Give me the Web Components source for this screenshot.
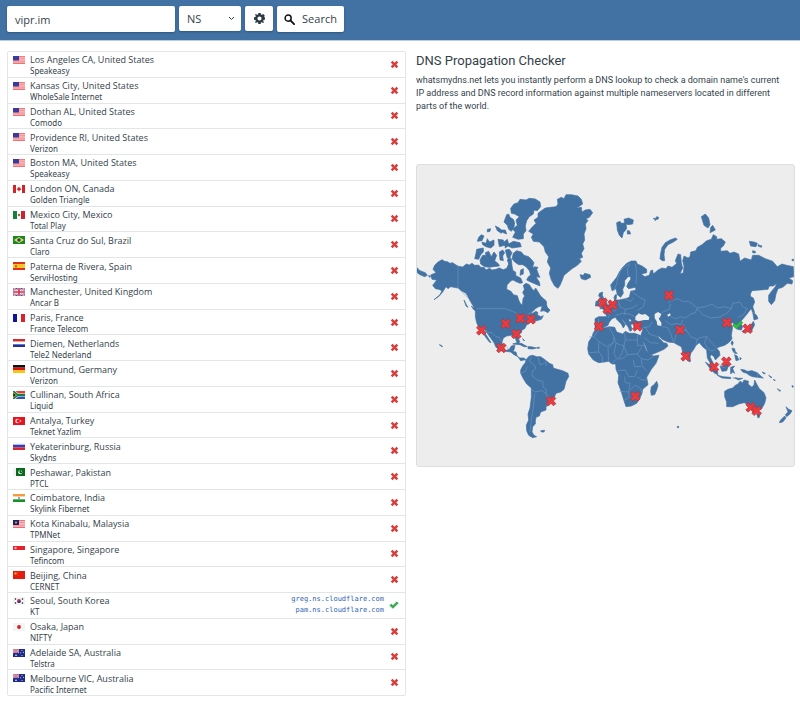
<!DOCTYPE html>
<html lang="en">
<head>
<meta charset="utf-8">
<meta name="viewport" content="width=device-width, initial-scale=1">
<title>DNS Propagation Checker</title>
<style>
html, body { margin: 0; }
body { background: #fff; color: #343f4b; font-family: "Open Sans", "Noto Sans", sans-serif; font-size: 9px; }
</style>
</head>
<body>
<dns-app>
  <search-bar slot="header"></search-bar>
  <result-list slot="results"></result-list>
  <about-panel slot="aside">
    <span slot="title">DNS Propagation Checker</span>
    whatsmydns.net lets you instantly perform a DNS lookup to check a domain name's current IP address and DNS record information against multiple nameservers located in different parts of the world.
  </about-panel>
  <world-map slot="aside"></world-map>
</dns-app>

<script>
class ShadowElement extends HTMLElement {
  constructor() { super(); this.attachShadow({ mode: "open" }); }
  connectedCallback() { this.shadowRoot.innerHTML = this.render(); }
}

customElements.define("dns-app", class extends ShadowElement {
  render() { return `
<style>
:host { display: flex; flex-direction: column; min-height: 100vh; }
main { flex: 1; display: grid; grid-template-columns: 399fr 379fr; gap: 10px; padding: 10px 5px 5px 7px; }
.col { display: flex; flex-direction: column; min-width: 0; }
@media (max-width: 560px) { main { grid-template-columns: 1fr; } }
</style>
<slot name="header"></slot>
<main>
  <div class="col"><slot name="results"></slot></div>
  <div class="col"><slot name="aside"></slot></div>
</main>`; }
});

customElements.define("search-bar", class extends ShadowElement {
  render() { return `
<style>
:host { display: block; background: #4172a3; border-bottom: 1px solid #b9cde0; }
form { display: flex; align-items: flex-start; gap: 4px; padding: 6px 7px; margin: 0; height: 28px; }
input, select, button {
  box-sizing: border-box; height: 25px; margin: 0; border: 0; border-radius: 2px; background: #fff;
  color: #343f4b; font-family: inherit; font-size: 11px; line-height: 16px; box-shadow: 0 1px 2px #1f3d5c80;
}
input { width: 168px; height: 26px; padding: 0 8px; }
.pick { display: grid; align-items: center; width: 62px; }
.pick > * { grid-area: 1 / 1; }
select { appearance: none; width: 100%; padding: 0 8px; }
.pick svg { justify-self: end; margin-right: 6px; pointer-events: none; }
button { display: flex; align-items: center; justify-content: center; padding: 0; width: 28px; }
.go { width: 67px; height: 26px; gap: 7px; }
svg { display: block; }
</style>
<form onsubmit="return false">
  <input type="text" aria-label="Domain name" value="vipr.im">
  <span class="pick">
    <select aria-label="Record type"><option>A</option><option>MX</option><option selected>NS</option><option>TXT</option></select>
    <svg width="7" height="5" viewBox="0 0 7 5" fill="none" stroke="#343f4b"><path d="M1 1l2.5 2.5L6 1"/></svg>
  </span>
  <button type="button" aria-label="Settings">
    <svg width="11" height="11" viewBox="-8 -8 16 16"><path fill="#2d3a48" fill-rule="evenodd" d="M-1.7-8h3.4l.4 2.1 1.5.6 1.8-1.2L7.800-4.100 6.500-2.300 7.900-1.700V1.700L5.900 2.100 5.300 3.600 6.500 5.400 5.400 6.500 3.600 5.300 2.100 5.900 1.700 8H-1.700L-2.100 5.900-3.600 5.300-5.400 6.500-6.500 5.400-5.300 3.600-5.900 2.100-8 1.700V-1.700L-5.900-2.100-5.300-3.600-6.500-5.400-5.400-6.500-3.600-5.300-2.100-5.900zM3 0A3 3 0 1 0-3 0 3 3 0 1 0 3 0z"/></svg>
  </button>
  <button type="submit" class="go">
    <svg width="11" height="11" viewBox="0 0 12 12" fill="none" stroke="#111"><circle cx="4.500" cy="4.500" r="3.300" stroke-width="1.600"/><path d="M7 7l4 4" stroke-width="2" stroke-linecap="round"/></svg>
    Search
  </button>
</form>`; }
});

const rect = (x, y, w, h, f) => `<path fill="${f}" d="M${x} ${y}h${w}v${h}h-${w}z"/>`;
const bands = (...c) => c.map((f, i) => rect(0, i * 8 / c.length, 12, 8 / c.length, f)).join("");
const posts = (...c) => c.map((f, i) => rect(i * 4, 0, 4, 8, f)).join("");
const dot = (x, y, r, f) => `<circle cx="${x}" cy="${y}" r="${r}" fill="${f}"/>`;
const line = (d, w, f) => `<path d="${d}" stroke="${f}" stroke-width="${w}" fill="none"/>`;
const union = line("M0 0l12 8M12 0L0 8", 1.8, "#fff") + line("M0 0l12 8M12 0L0 8", .8, "#d8304a") + line("M6 0v8M0 4h12", 2.8, "#fff") + line("M6 0v8M0 4h12", 1.600, "#d8304a");
const FLAGS = {
  us: bands("#f47a7e", "#f9a3a5", "#f47a7e", "#f9a3a5", "#f0787c", "#f9a3a5", "#ee7276") + rect(0, 0, 6, 4.500, "#3b3a9e"),
  ca: rect(0, 0, 12, 8, "#fff") + rect(0, 0, 3, 8, "#d92027") + rect(9, 0, 3, 8, "#d92027") + `<path fill="#d92027" d="M6 1.500l.7 1.300.8-.3-.1 1.200 1 .2-1.300 1.500H6.300V6.500h-.6V5.400H4.900L3.600 3.900l1-.2-.1-1.200.8.3z"/>`,
  mx: posts("#15803a", "#fff", "#d2202f") + dot(6, 4, 1.200, "#8a6a3c"),
  br: rect(0, 0, 12, 8, "#168a2a") + `<path fill="#f1e04a" d="M6 1l5 3-5 3-5-3z"/>` + dot(6, 4, 1.800, "#233a80"),
  es: rect(0, 0, 12, 8, "#e0301e") + rect(0, 2, 12, 4, "#fbc624") + rect(2, 3, 2, 2.500, "#d4682a"),
  gb: rect(0, 0, 12, 8, "#3c4f9e") + union,
  fr: posts("#13139a", "#fff", "#e0202c"),
  nl: bands("#d02a2a", "#fff", "#1f2fa0"),
  de: bands("#111", "#e01010", "#f8c800"),
  za: rect(0, 0, 12, 4, "#e04432") + rect(0, 4, 12, 4, "#2d55b8") + line("M0 0l5 4-5 4M5 4h7", 3, "#fff") + line("M0 0l5 4-5 4M5 4h7", 1.800, "#158045") + `<path d="M0 1.500L3.400 4 0 6.500z" fill="#111" stroke="#f0c030" stroke-width=".6"/>`,
  tr: rect(0, 0, 12, 8, "#e8151f") + dot(4.500, 4, 2.200, "#fff") + dot(5.200, 4, 1.700, "#e8151f") + dot(7.500, 4, .8, "#fff"),
  ru: bands("#f7f7fb", "#2c3fc0", "#d8242e"),
  pk: rect(0, 0, 12, 8, "#086a1c") + rect(0, 0, 3, 8, "#f2f4f2") + dot(7.300, 4.200, 2, "#fff") + dot(8, 3.700, 1.700, "#086a1c") + dot(8.500, 3, .5, "#fff"),
  in: bands("#f59a3e", "#fff", "#17902a") + dot(6, 4, .9, "#6a6ac0"),
  my: bands("#e8707a", "#fbb0b4", "#e8707a", "#fbb0b4", "#e8707a", "#fbb0b4", "#e8707a") + rect(0, 0, 6, 5, "#20206a") + dot(3, 2.500, 1.100, "#c8a84a"),
  sg: bands("#e8202c", "#fff") + dot(2.500, 2, 1.200, "#f9b0b4"),
  cn: rect(0, 0, 12, 8, "#e51a10") + dot(2.500, 2.500, 1.200, "#f7a21c") + dot(5, 1.500, .4, "#f7c21c") + dot(5, 4, .4, "#f7c21c"),
  kr: rect(0, 0, 12, 8, "#f4f4f4") + dot(6, 4, 1.900, "#c93048") + `<path fill="#2b3a9a" d="M4.100 4a1.900 1.900 0 0 0 3.800 0q-1-.8-1.900 0t-1.900 0z"/>` + line("M2 2.500l1-1M9 1.500l1 1M2 5.500l1 1M9 6.500l1-1", 1.200, "#333"),
  jp: rect(0, 0, 12, 8, "#f4f4f4") + dot(6, 4, 1.900, "#d81c24"),
  au: rect(0, 0, 12, 8, "#1d2a8c") + `<g transform="scale(.5)">${union}</g>` + dot(3, 6.300, .8, "#fff") + dot(9, 1.500, .5, "#fff") + dot(9, 6.500, .5, "#fff") + dot(7.700, 3.700, .5, "#fff") + dot(10.500, 3.200, .5, "#fff"),
};
const CROSS = "M-5-2.600L-2.600-5 0-2.400 2.600-5 5-2.600 2.400 0 5 2.600 2.600 5 0 2.400-2.600 5-5 2.600-2.400 0z";
const TICK = "M-5.500.6L-3.300-1.600-1.300.3 3.300-4.300 5.500-2.100-1.300 4.600z";

customElements.define("result-row", class extends ShadowElement {
  render() {
    const a = n => this.getAttribute(n) || "";
    const found = a("servers");
    return `
<style>
:host { display: flex; align-items: center; box-sizing: border-box; flex: 1 0 auto; padding: 0 6px 0 5px; border-bottom: 1px solid #e2e6e8; }
:host(:last-child) { border-bottom: 0; }
.flag { display: block; align-self: flex-start; margin: 4px 5px 0 0; }
.where { flex: 1; min-width: 0; }
.place { font-size: 9px; line-height: 13px; padding-top: 1px; }
.isp { font-family: "Noto Sans", sans-serif; font-size: 8px; line-height: 10px; }
.found { margin-right: 5px; text-align: right; color: #2a62b4; font: 7px/11px "DejaVu Sans Mono", "Liberation Mono", monospace; }
.mark { display: block; flex: none; }
.yes { width: 10px; height: 10px; }
</style>
<svg class="flag" width="12" height="8" viewBox="0 0 12 8" aria-hidden="true">${FLAGS[a("flag")]}</svg>
<div class="where"><div class="place">${a("place")}</div><div class="isp">${a("isp")}</div></div>
${found ? `<div class="found">${found.split(" ").map(s => `<div>${s}</div>`).join("")}</div>` : ""}
<svg class="mark${found ? " yes" : ""}" width="9" height="9" viewBox="-6 -6 12 12" role="img" aria-label="${found ? "Found" : "Not found"}"><path fill="${found ? "#38ad51" : "#d5403f"}" d="${found ? TICK : CROSS}"/></svg>`;
  }
});

const RESULTS = [
  ["us", "Los Angeles CA, United States", "Speakeasy"],
  ["us", "Kansas City, United States", "WholeSale Internet"],
  ["us", "Dothan AL, United States", "Comodo"],
  ["us", "Providence RI, United States", "Verizon"],
  ["us", "Boston MA, United States", "Speakeasy"],
  ["ca", "London ON, Canada", "Golden Triangle"],
  ["mx", "Mexico City, Mexico", "Total Play"],
  ["br", "Santa Cruz do Sul, Brazil", "Claro"],
  ["es", "Paterna de Rivera, Spain", "ServiHosting"],
  ["gb", "Manchester, United Kingdom", "Ancar B"],
  ["fr", "Paris, France", "France Telecom"],
  ["nl", "Diemen, Netherlands", "Tele2 Nederland"],
  ["de", "Dortmund, Germany", "Verizon"],
  ["za", "Cullinan, South Africa", "Liquid"],
  ["tr", "Antalya, Turkey", "Teknet Yazlim"],
  ["ru", "Yekaterinburg, Russia", "Skydns"],
  ["pk", "Peshawar, Pakistan", "PTCL"],
  ["in", "Coimbatore, India", "Skylink Fibernet"],
  ["my", "Kota Kinabalu, Malaysia", "TPMNet"],
  ["sg", "Singapore, Singapore", "Tefincom"],
  ["cn", "Beijing, China", "CERNET"],
  ["kr", "Seoul, South Korea", "KT", "greg.ns.cloudflare.com pam.ns.cloudflare.com"],
  ["jp", "Osaka, Japan", "NIFTY"],
  ["au", "Adelaide SA, Australia", "Telstra"],
  ["au", "Melbourne VIC, Australia", "Pacific Internet"],
];

customElements.define("result-list", class extends ShadowElement {
  render() { return `
<style>
:host { flex: 1; display: flex; flex-direction: column; border: 1px solid #e2e6e8; border-radius: 2px; }
</style>
${RESULTS.map(([flag, place, isp, servers]) => `<result-row role="listitem" flag="${flag}" place="${place}" isp="${isp}"${servers ? ` servers="${servers}"` : ""}></result-row>`).join("")}`; }
  connectedCallback() { super.connectedCallback(); this.setAttribute("role", "list"); }
});

customElements.define("about-panel", class extends ShadowElement {
  render() { return `
<style>
:host { display: block; padding: 0 10px 51px 0; font-family: Roboto, "Open Sans", sans-serif; }
h1 { margin: 0 0 3px; font-size: 13px; font-weight: 400; line-height: 20px; }
p { margin: 0; font-size: 9px; line-height: 13px; }
</style>
<h1><slot name="title"></slot></h1>
<p><slot></slot></p>`; }
});

/* Map drawing: land outlines, seas cut into them, country borders. */
const LAND = [
  /* North and Central America */
  "M56 345L72 338 63 328 68 316 78 306 90 299 98 304 106 305 114 310 122 308 132 315 140 319 152 321 163 312 172 315 180 310 188 316 200 315 206 322 216 322 222 330 232 325 240 330 252 328 262 324 274 329 284 325 290 312 286 300 292 290 298 298 300 318 303 332 311 336 312 352 306 358 295 364 285 375 284 388 297 394 304 404 316 407 320 420 326 432 331 434 333 416 338 408 332 398 337 388 334 376 342 370 352 374 358 384 366 392 371 384 378 395 386 408 392 414 402 422 404 430 396 437 380 440 370 446 360 456 358 462 372 454 378 458 376 464 386 470 394 467 388 478 374 482 362 482 352 490 344 494 338 506 330 510 328 518 318 526 317 532 323 544 320 552 313 544 309 530 298 526 284 528 274 534 270 546 272 560 280 572 292 568 298 558 309 556 306 570 301 574 312 576 316 590 324 594 336 594 342 599 336 600 326 602 318 590 306 584 296 576 282 574 266 572 252 562 246 548 236 534 226 520 217 508 212 508 222 524 232 540 237 548 232 546 220 530 210 512 200 502 194 488 190 470 190 450 185 440 175 424 168 410 162 400 148 392 138 384 126 382 116 380 108 386 102 380 92 396 82 408 66 419 84 404 90 392 80 388 70 386 62 376 70 366 74 360 60 358z",
  "M14 322L24 332 40 338 46 346 38 350 28 346 20 342 14 336z",
  "M50 346L56 350 52 352zM156 420L164 436 168 442 162 438zM178 438L194 450 196 456 184 448z",
  /* Canadian Arctic */
  "M296 145L306 132 318 128 324 118 342 120 352 115 370 117 384 126 386 140 376 152 366 150 364 162 352 170 344 182 340 198 342 212 334 222 334 236 318 238 302 232 310 216 302 208 316 196 312 180 322 170 308 162 298 160z",
  "M284 164L290 162 294 172 304 178 308 188 306 202 298 214 290 208 286 196 276 186z",
  "M250 198L262 204 272 214 268 220 256 212zM264 210L280 210 284 222 274 218zM226 208L236 206 234 214 226 216zM208 224L216 228 210 242 196 244 200 232zM226 236L232 246 246 240 246 256 236 264 222 260 212 254 210 246 222 250z",
  "M258 238L274 240 278 256 262 260zM276 246L286 238 290 252 304 244 324 248 328 260 300 264 288 258 280 264z",
  "M194 268L214 264 214 276 206 284 200 298 188 296 192 280zM204 300L212 286 222 286 220 278 230 274 238 290 246 276 254 286 248 302 260 312 262 318 244 320 232 322 218 320 206 312z",
  "M262 276L272 270 278 278 272 288 274 302 264 300zM280 270L292 268 300 278 294 292 286 294z",
  "M304 280L314 272 328 276 336 286 350 290 358 298 366 308 362 320 374 328 380 344 384 352 372 350 382 366 384 378 370 372 356 366 344 360 348 352 356 344 352 332 342 320 332 314 320 314 308 306 300 296z",
  "M302 350L314 348 326 354 332 368 324 370 310 364 300 358zM326 330L334 326 334 342 324 346zM366 320L378 322 374 328z",
  "M390 440L402 428 406 442 414 450 408 458 396 452 386 454z",
  /* Greenland */
  "M350 214L360 202 372 190 366 180 378 172 378 160 388 152 400 144 416 142 432 140 438 132 436 118 448 112 456 116 462 104 478 104 498 108 508 118 512 132 500 140 490 144 508 142 510 156 520 150 534 148 542 158 532 172 522 176 528 182 520 192 522 206 516 222 518 240 512 252 516 266 508 280 512 292 502 296 508 304 496 316 480 326 468 336 456 346 450 362 444 376 438 385 428 378 418 360 412 340 416 324 406 306 410 290 400 276 396 260 382 246 364 244 358 232 364 222z",
  "M504 344L514 346 518 340 534 344 536 352 520 360 508 356z",
  /* Caribbean */
  "M302 552L314 548 328 550 346 560 336 560 324 554zM348 560L358 560 374 564 362 567 348 566zM332 536l6 6-4-1zM376 562h6v3h-6z",
  /* South America */
  "M342 599L352 588 362 586 374 590 386 590 400 600 412 610 422 614 424 624 436 628 452 632 468 640 470 650 462 664 456 688 446 696 432 700 424 718 412 734 402 740 402 750 386 756 382 768 372 772 370 784 370 792 362 800 360 816 366 826 374 830 362 833 350 826 344 812 343 796 350 780 348 762 354 744 358 712 358 684 344 672 334 656 326 640 326 630 332 618 340 608z",
  "M386 812L398 811 396 816 388 816z",
  /* Hawaii and small islands */
  "M82 554l6 2 4 4-4-1zM796 799h4v4h-4z",
  /* Svalbard, Franz Josef, Novaya Zemlya, Severnaya Zemlya */
  "M614 188L624 184 628 190 642 188 644 206 634 218 630 234 622 226 616 210zM636 178L650 174 664 180 662 192 648 194 638 188zM646 212L652 212 656 222 646 222zM724 174l6 2 4-6 6 2-2 6-6 0-2 4z",
  "M744 296L746 280 750 262 760 248 774 240 790 234 796 238 784 246 768 254 758 268 756 284 758 302 750 302z",
  "M868 170L880 162 890 174 894 194 888 204 876 196zM896 202l6-6 8 14-16 8zM1012 244L1026 246 1036 250 1032 260 1016 258zM1038 254l12 4-2 4-10-4zM1022 272l8 2v5l-8-1zM1140 298h5v4h-5z",
  /* British Isles */
  "M562 400L572 396 571 406 576 416 584 428 588 440 578 446 564 446 570 438 564 426 566 414 560 408zM552 424L562 422 560 438 550 438z",
  /* Eurasia */
  "M596 375L606 362 614 352 622 336 632 322 644 310 658 303 672 303 676 312 690 318 704 328 704 338 688 342 698 350 712 346 716 332 722 330 724 342 738 330 750 324 762 326 768 318 780 322 792 312 802 316 804 330 792 336 796 316 790 302 798 282 806 284 808 308 812 324 804 342 814 338 816 318 812 302 816 288 828 294 834 290 836 276 852 272 856 262 870 254 884 242 898 238 904 224 914 230 914 238 928 236 940 246 934 258 926 264 926 274 946 272 954 280 966 276 980 282 984 304 998 294 1018 300 1022 286 1040 286 1060 296 1082 304 1096 320 1110 312 1124 316 1144 320 1145 350 1130 354 1142 362 1140 372 1126 370 1112 382 1098 386 1092 402 1088 422 1078 434 1070 424 1070 406 1080 392 1090 380 1094 370 1084 378 1072 378 1068 388 1044 390 1020 392 1012 408 1024 414 1028 426 1022 440 1008 458 1002 466 990 480 984 486 992 500 988 510 976 508 974 498 962 488 954 492 962 500 960 514 958 526 960 536 950 548 938 556 924 560 914 564 922 574 924 586 910 600 906 590 898 584 894 590 902 606 910 622 904 624 894 608 886 594 884 570 872 560 862 548 852 556 844 570 836 580 834 592 829 600 822 594 812 576 808 560 796 554 786 548 768 546 750 538 742 530 736 526 742 536 750 542 754 548 764 550 768 558 756 568 738 576 714 586 708 578 700 556 688 536 685 530 692 510 692 504 674 506 666 502 664 490 656 494 660 510 654 514 648 500 640 490 630 476 626 470 632 482 640 494 634 504 628 492 614 478 610 472 600 476 592 486 588 496 576 502 566 506 549 504 549 476 560 470 584 470 580 456 570 444 584 440 596 428 608 424 606 412 610 404 614 404 612 420 620 420 640 416 652 412 656 394 672 390 670 382 650 386 644 380 648 370 656 358 656 350 648 350 638 362 638 376 632 388 634 400 626 412 616 404 612 386 600 392z",
  "M1008 396l6 4 8 40 6 18-8-4-6-30z",
  /* Africa and Madagascar */
  "M684 526L668 520 652 520 640 514 632 522 614 516 608 502 592 500 576 504 560 508 552 506 544 518 540 530 530 546 527 566 530 582 544 600 560 608 578 606 590 604 600 612 611 612 612 628 620 646 618 668 628 696 636 722 642 740 658 738 674 730 684 714 690 700 692 688 708 674 704 652 718 628 732 610 741 586 726 588 712 584 702 570 694 548z",
  "M734 664L738 676 734 690 728 704 718 706 716 694 718 680 726 674z",
  /* Japan, Taiwan, Philippines */
  "M1022 456L1034 466 1038 476 1026 480zM1024 484L1028 494 1020 510 1008 516 1000 514 994 518 990 514 1002 508 1014 500zM960 542l4 6-3 8-4-6zM960 564l8 2 2 10 6 4-8 0-6-8zM968 584l8 4 4 12-8 2zM984 592l4 4-4 4z",
  "M880 606L892 614 906 624 916 632 918 644 908 640 896 628zM916 646L934 650 956 652 956 656 930 654zM962 654l14 0M968 654l12 1 12 0-12 5zM924 618L934 618 944 610 950 616 944 632 930 634zM956 622L968 618 962 626 968 640 962 636 956 642z",
  "M986 628L998 630 1006 634 1020 632 1036 638 1046 648 1054 654 1036 652 1022 650 1012 646 1004 640 992 636zM1050 636l10 4-4 2zM1070 646l10 6-3 1zM1084 658l6 3-3 1zM1096 686l10 6-3 2zM1140 676l5 4-4 2zM830 596l6 4-2 6-4-2z",
  /* Australia and New Zealand */
  "M938 694L948 688 962 684 970 676 978 672 984 664 992 668 996 660 1010 664 1008 672 1020 682 1026 674 1028 660 1034 672 1042 686 1056 698 1062 714 1058 730 1048 748 1034 752 1020 746 1012 734 996 728 980 732 962 740 944 740 944 726 938 710zM1034 762l10 0-2 10-4 2z",
  "M1122 740L1130 748 1140 752 1134 762 1124 770 1120 764 1128 756zM1118 768L1122 774 1112 786 1102 788 1106 780z",
];
const SEA = [
  "M670 470L680 460 690 464 700 462 712 472 710 480 696 480 680 484 670 480z",
  "M728 462L738 456 748 462 744 472 740 476 748 488 748 498 736 496 734 484 728 474z",
  "M766 464l8-4 2 6-8 4zM650 478l8 2-4 6z",
];
const BORDERS = "M138 318V384L150 396 168 414M194 446H280L302 454 322 466M346 464L370 450M212 508L230 518 240 518 252 530 262 532 270 546M292 570L284 560M358 590L352 604 366 614 372 626 362 632 360 648 376 660 392 664 394 682 402 688 404 704 416 714M326 640L340 634 346 620M378 592L384 614 398 610M400 602L404 618M360 690L370 696 388 692 402 700M368 700L364 740 358 780 354 816M402 706L412 722 404 738M604 394L614 372 618 350 630 326 650 312M648 348L646 326 654 310M670 310L674 340 672 372M656 390L668 402 686 414 700 420 694 440 676 452M620 424L624 440 640 448 660 444 676 434M640 418L656 424 664 414M588 474L596 456 612 450 608 436M610 466L632 460 652 462 668 470M640 448L636 466M560 476L560 500M770 430L778 422 796 416 812 424 830 424 844 434 856 444 850 458 836 462 820 474 806 470 790 476 776 470M746 462L752 456 772 448 776 432M856 444L880 440 900 432 916 444 936 440 958 446 962 430 984 426 992 440 1006 446 996 462 978 474M856 446L872 464 896 474 920 472 944 460 958 446M760 482L776 494 792 490 806 494 812 480M750 500L766 502 776 520 784 546M692 504L712 500 720 486M700 500L712 522 736 530M786 546L792 526 806 510 824 512 836 530 856 538 866 532 884 530 898 548 912 562M812 492L824 512M856 538L852 552M884 530L878 548 886 564 896 572 908 570M696 532L716 548 740 550M560 508L546 530 560 544 584 560 604 548 606 530 592 502M546 530H532M560 544V576L532 578M606 530L612 550 636 558 640 540 676 540M640 540L638 520M676 524V556H696M604 548L588 566 590 602M612 550L606 580 614 596 600 610M636 558L630 580 618 596M560 576L570 588 572 606M636 560L646 584 676 582 690 560M646 584L634 594 618 598M676 582L688 596 708 600 726 588M688 596L690 618 706 634M688 620L668 620 664 600M618 632L640 630 650 650 668 650 676 630M622 694L650 696 654 670 640 668 638 650M650 696L652 712 638 720M654 690L670 676 684 684 690 698M676 650L690 660 706 660M1036 638V652M924 618L940 624";
const MARKS = [[208,511],[281,491],[325,475],[356,478],[313,522],[268,564],[417,723],[561,499],[572,428],[587,448],[602,434],[676,499],[771,406],[804,510],[821,589],[945,488],[1007,506],[906,621],[943,605],[670,709],[1016,742],[1034,752]];

customElements.define("world-map", class extends ShadowElement {
  render() { return `
<style>
:host { display: block; border: 1px solid #dcdede; border-radius: 3px; background: #ededed; overflow: hidden; }
svg { display: block; width: 100%; height: auto; }
</style>
<svg viewBox="15 15 1131 903" role="img" aria-label="World map of the nameservers">
  <path d="${LAND.join("")}" fill="#4172a3" stroke="#4172a3" stroke-width="2" stroke-linejoin="round"/>
  <path d="${SEA.join("")}" fill="#ededed"/>
  <path d="${BORDERS}" fill="none" stroke="#7ba0c6" stroke-width="1.500" stroke-linejoin="round"/>
  <g transform="translate(977 494) scale(2.800)"><path d="${TICK}" fill="#2fc440" stroke="#24863a" stroke-width=".7"/></g>
  ${MARKS.map(([x, y]) => `<g transform="translate(${x} ${y}) scale(2.900)"><path d="${CROSS}" fill="#ee393d" stroke="#a03a4c" stroke-width=".8"/></g>`).join("")}
</svg>`; }
});
</script>
</body>
</html>
